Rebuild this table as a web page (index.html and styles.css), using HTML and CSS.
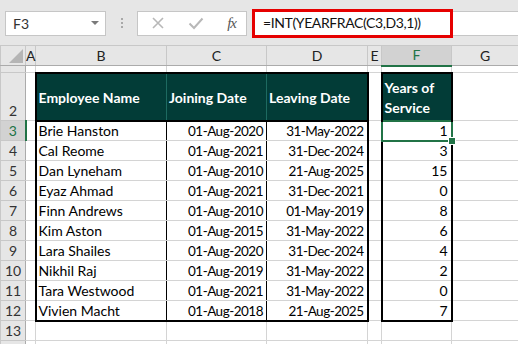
FILE: index.html
```html
<!DOCTYPE html>
<html lang="en">
  <head>
    <meta charset="UTF-8" />
    <title>Years of Service</title>
    <link rel="stylesheet" href="styles.css">
  </head>
  <body>
    <div class="toolbar">
      <div class="name-box">
        <span>F3</span>
        <span class="caret"></span>
      </div>
      <div class="grip"><i></i><i></i><i></i></div>
      <div class="fx-buttons">
        <svg width="14" height="14" viewBox="0 0 14 14">
          <path d="M2 2 L12 12 M12 2 L2 12" stroke="#b8b8b8" stroke-width="1.6" fill="none" />
        </svg>
        <svg width="16" height="14" viewBox="0 0 16 14">
          <path d="M1.5 7.5 L6 12 L14.5 2.5" stroke="#b8b8b8" stroke-width="2" fill="none" />
        </svg>
        <span class="fx">fx</span>
      </div>
      <div class="formula-bar">
        <div class="formula">=INT(YEARFRAC(C3,D3,1))</div>
      </div>
    </div>

    <table class="sheet">
      <colgroup>
        <col style="width: 25px" />
        <col style="width: 10px" />
        <col style="width: 131px" />
        <col style="width: 100px" />
        <col style="width: 101px" />
        <col style="width: 14px" />
        <col style="width: 70px" />
        <col style="width: 67px" />
      </colgroup>
      <tr class="col-heads">
        <td class="corner">
          <svg width="14" height="14" viewBox="0 0 14 14"><path d="M14 0 L14 14 L0 14 Z" fill="#b5b5b5" /></svg>
        </td>
        <td class="ch">A</td>
        <td class="ch">B</td>
        <td class="ch">C</td>
        <td class="ch">D</td>
        <td class="ch">E</td>
        <td class="ch sel">F</td>
        <td class="ch">G</td>
      </tr>
      <tr class="r1">
        <td class="rh"><div class="clip">1</div></td>
        <td></td><td></td><td></td><td></td><td></td><td></td><td></td>
      </tr>
      <tr class="r2">
        <td class="rh">2</td>
        <td></td>
        <td class="hd name">Employee Name</td>
        <td class="hd join">Joining Date</td>
        <td class="hd leave">Leaving Date</td>
        <td></td>
        <td class="hd years">Years of Service</td>
        <td></td>
      </tr>
      <tr>
        <td class="rh sel">3</td><td></td>
        <td class="name">Brie Hanston</td><td class="join">01-Aug-2020</td><td class="leave">31-May-2022</td>
        <td></td><td class="years current">1<span class="handle"></span></td><td></td>
      </tr>
      <tr>
        <td class="rh">4</td><td></td>
        <td class="name">Cal Reome</td><td class="join">01-Aug-2021</td><td class="leave">31-Dec-2024</td>
        <td></td><td class="years">3</td><td></td>
      </tr>
      <tr>
        <td class="rh">5</td><td></td>
        <td class="name">Dan Lyneham</td><td class="join">01-Aug-2010</td><td class="leave">21-Aug-2025</td>
        <td></td><td class="years">15</td><td></td>
      </tr>
      <tr>
        <td class="rh">6</td><td></td>
        <td class="name">Eyaz Ahmad</td><td class="join">01-Aug-2021</td><td class="leave">31-Dec-2021</td>
        <td></td><td class="years">0</td><td></td>
      </tr>
      <tr>
        <td class="rh">7</td><td></td>
        <td class="name">Finn Andrews</td><td class="join">01-Aug-2010</td><td class="leave">01-May-2019</td>
        <td></td><td class="years">8</td><td></td>
      </tr>
      <tr>
        <td class="rh">8</td><td></td>
        <td class="name">Kim Aston</td><td class="join">01-Aug-2015</td><td class="leave">31-May-2022</td>
        <td></td><td class="years">6</td><td></td>
      </tr>
      <tr>
        <td class="rh">9</td><td></td>
        <td class="name">Lara Shailes</td><td class="join">01-Aug-2020</td><td class="leave">31-Dec-2024</td>
        <td></td><td class="years">4</td><td></td>
      </tr>
      <tr>
        <td class="rh">10</td><td></td>
        <td class="name">Nikhil Raj</td><td class="join">01-Aug-2019</td><td class="leave">31-May-2022</td>
        <td></td><td class="years">2</td><td></td>
      </tr>
      <tr>
        <td class="rh">11</td><td></td>
        <td class="name">Tara Westwood</td><td class="join">01-Aug-2021</td><td class="leave">31-May-2022</td>
        <td></td><td class="years">0</td><td></td>
      </tr>
      <tr class="last">
        <td class="rh">12</td><td></td>
        <td class="name">Vivien Macht</td><td class="join">01-Aug-2018</td><td class="leave">21-Aug-2025</td>
        <td></td><td class="years">7</td><td></td>
      </tr>
      <tr>
        <td class="rh">13</td>
        <td></td><td></td><td></td><td></td><td></td><td></td><td></td>
      </tr>
      <tr>
        <td class="rh"></td>
        <td></td><td></td><td></td><td></td><td></td><td></td><td></td>
      </tr>
    </table>
  </body>
</html>
```

FILE: styles.css
```css
* {
  margin: 0;
  padding: 0;
  box-sizing: border-box;
}

body {
  font-family: "Lato", "Open Sans", sans-serif;
  background: #ffffff;
  color: #000000;
  width: 518px;
  height: 344px;
  overflow: hidden;
}

/* Formula bar strip */
.toolbar {
  height: 45px;
  background: #e6e6e6;
  display: flex;
  align-items: center;
  padding-left: 5px;
  padding-top: 1px;
}

.name-box {
  width: 101px;
  height: 25px;
  background: #ffffff;
  border: 1px solid #c6c6c6;
  display: flex;
  align-items: center;
  justify-content: space-between;
  padding: 0 6px 0 7px;
  font-size: 14px;
  color: #333333;
}

.caret {
  width: 0;
  height: 0;
  border-left: 4px solid transparent;
  border-right: 4px solid transparent;
  border-top: 4px solid #7a7a7a;
}

.grip {
  width: 31px;
  display: flex;
  flex-direction: column;
  align-items: center;
  gap: 2px;
}

.grip i {
  width: 2px;
  height: 2px;
  background: #a8a8a8;
}

.fx-buttons {
  width: 110px;
  height: 25px;
  background: #ffffff;
  border: 1px solid #c6c6c6;
  display: flex;
  align-items: center;
  justify-content: space-between;
  padding: 0 10px 0 13px;
}

.fx {
  font-family: "Liberation Serif", serif;
  font-style: italic;
  font-size: 15px;
  color: #555555;
  letter-spacing: -1px;
}

.formula-bar {
  flex: 1;
  height: 25px;
  margin-left: 5px;
  background: #ffffff;
  border-top: 1px solid #c6c6c6;
  border-bottom: 1px solid #c6c6c6;
  display: flex;
  align-items: center;
}

.formula {
  width: 201px;
  height: 29px;
  border: 3px solid #e60000;
  padding-left: 8px;
  font-size: 14px;
  letter-spacing: -0.4px;
  line-height: 22px;
  color: #111111;
}

/* Grid */
.sheet {
  border-collapse: collapse;
  table-layout: fixed;
  width: 518px;
  font-size: 14px;
}

.sheet td {
  border: 1px solid #d4d4d4;
  height: 20px;
  padding: 0 3px 0 2px;
  line-height: 18px;
  white-space: nowrap;
  vertical-align: bottom;
}

.col-heads td {
  background: #e6e6e6;
  border-color: #c8c8c8;
  border-bottom-color: #ababab;
  text-align: center;
  font-size: 14px;
  color: #222222;
  vertical-align: middle;
  padding: 0;
}

.corner {
  text-align: right !important;
  vertical-align: bottom !important;
}

.corner svg {
  display: block;
  margin: 0 2px 2px auto;
}

.ch.sel {
  background: #d2d2d2;
  color: #217346;
  border-bottom: 2px solid #217346;
}

.sheet td.rh {
  background: #e6e6e6;
  border-color: #c8c8c8;
  border-right-color: #ababab;
  text-align: center;
  font-size: 14px;
  color: #333333;
  padding: 0;
}

.sheet td.rh.sel {
  background: #d2d2d2;
  color: #217346;
  border-right: 2px solid #217346;
}

.r1 td {
  height: 7px;
}

.clip {
  height: 6px;
  overflow: hidden;
  line-height: 26px;
}

.r2 td {
  height: 48px;
}

.sheet td.name {
  border-left: 2px solid #000000;
  border-right: 1px solid #000000;
}

.sheet td.join {
  text-align: right;
  font-size: 13.5px;
  letter-spacing: -0.5px;
  border-right: 1px solid #000000;
}

.sheet td.leave {
  text-align: right;
  font-size: 13.5px;
  letter-spacing: -0.5px;
  border-right: 2px solid #000000;
}

.sheet td.years {
  text-align: right;
  border-left: 2px solid #000000;
  border-right: 2px solid #000000;
}

/* header cells of both tables */
.sheet .r2 td.hd {
  background: #023c37;
  color: #ffffff;
  font-size: 14px;
  font-weight: 700;
  letter-spacing: 0;
  text-align: left;
  vertical-align: middle;
  border-top: 2px solid #000000;
  border-bottom: 2px solid #000000;
  white-space: normal;
  line-height: 20px;
  padding-top: 2px;
}

.sheet .r2 td.hd.name,
.sheet .r2 td.hd.join {
  border-right: 1px solid #1d6a60;
}

.sheet .r2 td.hd.years {
  border-bottom: none;
  padding-right: 6px;
}

.last td.name,
.last td.join,
.last td.leave,
.last td.years {
  border-bottom: 2px solid #000000;
}

.sheet td.current {
  border: 2px solid #217346;
  position: relative;
}

.handle {
  position: absolute;
  z-index: 1;
  right: -5px;
  bottom: -5px;
  width: 8px;
  height: 8px;
  background: #217346;
  border: 1px solid #ffffff;
}
```
